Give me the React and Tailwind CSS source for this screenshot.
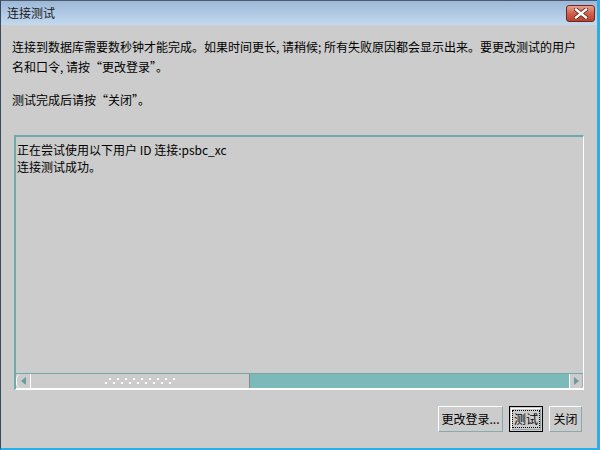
import React from "react";

const font = {
  fontFamily: '"Noto Sans CJK SC", "Liberation Sans", sans-serif',
};

function CloseButton() {
  return (
    <div className="w-[29px] h-[17px] rounded-[3px] border border-[#6e2a22] bg-gradient-to-b from-[#e9a08f] via-[#d0604c] to-[#b8402e] flex items-center justify-center">
      <svg width="14" height="11" viewBox="0 0 14 11">
        <path
          d="M2 1.5 L12 9.5 M12 1.5 L2 9.5"
          stroke="#5a1a12"
          strokeWidth="4"
          strokeLinecap="square"
        />
        <path
          d="M2 1.5 L12 9.5 M12 1.5 L2 9.5"
          stroke="#ffffff"
          strokeWidth="2.4"
          strokeLinecap="square"
        />
      </svg>
    </div>
  );
}

function ScrollBar() {
  const dots = Array.from({ length: 9 });
  return (
    <div className="flex h-[16px] border-t border-t-[#6fa9a8] border-b border-b-white">
      <div className="w-[15px] flex items-center justify-center border-l border-l-white rounded-l-[5px] border-r border-r-white">
        <svg width="6" height="8" viewBox="0 0 6 8">
          <path d="M5 0 L0 4 L5 8 Z" fill="#6a9e9d" />
        </svg>
      </div>
      <div className="w-[219px] bg-[#cccccc] border-r border-r-[#888] flex flex-col items-center justify-center gap-[2px]">
        <div className="flex gap-[6px] pl-[4px]">
          {dots.map((_, i) => (
            <div key={i} className="w-[2px] h-[2px] bg-white" />
          ))}
        </div>
        <div className="flex gap-[6px] pr-[4px]">
          {dots.map((_, i) => (
            <div key={i} className="w-[2px] h-[2px] bg-white" />
          ))}
        </div>
      </div>
      <div className="flex-1 bg-[#7bbab9]" />
      <div className="w-[14px] bg-[#cccccc] border-l border-l-white rounded-r-[3px] border-r border-r-[#aaa] flex items-center justify-center">
        <svg width="6" height="8" viewBox="0 0 6 8">
          <path d="M1 0 L6 4 L1 8 Z" fill="#6a9e9d" />
        </svg>
      </div>
    </div>
  );
}

function Button({ label, focused, width }) {
  if (focused) {
    return (
      <div className={`${width} h-[26px] border border-black p-[1px]`}>
        <div className="h-full border-t border-l border-white border-b border-r border-b-[#8aa] border-r-[#8aa] flex items-center justify-center">
          <span className="border border-dotted border-black px-[1px] leading-[16px] text-[12px] text-black">
            {label}
          </span>
        </div>
      </div>
    );
  }
  return (
    <div
      className={`${width} h-[26px] border-t border-l border-white border-b border-r border-b-[#8aa] border-r-[#8aa] flex items-center justify-center text-[12px] text-black`}
    >
      {label}
    </div>
  );
}

export default function App() {
  return (
    <div
      style={font}
      className="w-[600px] h-[450px] bg-[#cccccc] flex flex-col border-l border-l-[#3a4a5a] border-r-[3px] border-r-[#2aaee6] border-b-2 border-b-[#2aaee6] overflow-hidden"
    >
      <div className="h-[25px] flex items-center justify-between pl-[6px] pr-[2px] bg-gradient-to-b from-[#9db8d8] to-[#c3d9ef] border-t border-t-[#4a5a6a]">
        <span className="text-[12px] text-[#1a1a1a]">连接测试</span>
        <CloseButton />
      </div>

      <div className="pt-[12px] pl-[11px] text-[12px] leading-[20px] text-black">
        <p>
          连接到数据库需要数秒钟才能完成。如果时间更长, 请稍候; 所有失败原因都会显示出来。要更改测试的用户
          <br />
          名和口令, 请按“更改登录”。
        </p>
        <p className="mt-[13px]">测试完成后请按“关闭”。</p>
      </div>

      <div className="mt-[25px] mx-[13px] h-[255px] flex flex-col border-t-2 border-l-2 border-t-[#6fa9a8] border-l-[#6fa9a8] border-r border-b border-r-white border-b-white">
        <div className="flex-1 pl-[1px] pt-[4px] text-[12px] leading-[17px] text-black">
          <div>正在尝试使用以下用户 ID 连接:psbc_xc</div>
          <div>连接测试成功。</div>
        </div>
        <ScrollBar />
      </div>

      <div className="mt-[16px] flex justify-end gap-[6px] pr-[15px]">
        <Button label="更改登录..." width="w-[65px]" />
        <Button label="测试" focused width="w-[34px]" />
        <Button label="关闭" width="w-[33px]" />
      </div>
    </div>
  );
}
